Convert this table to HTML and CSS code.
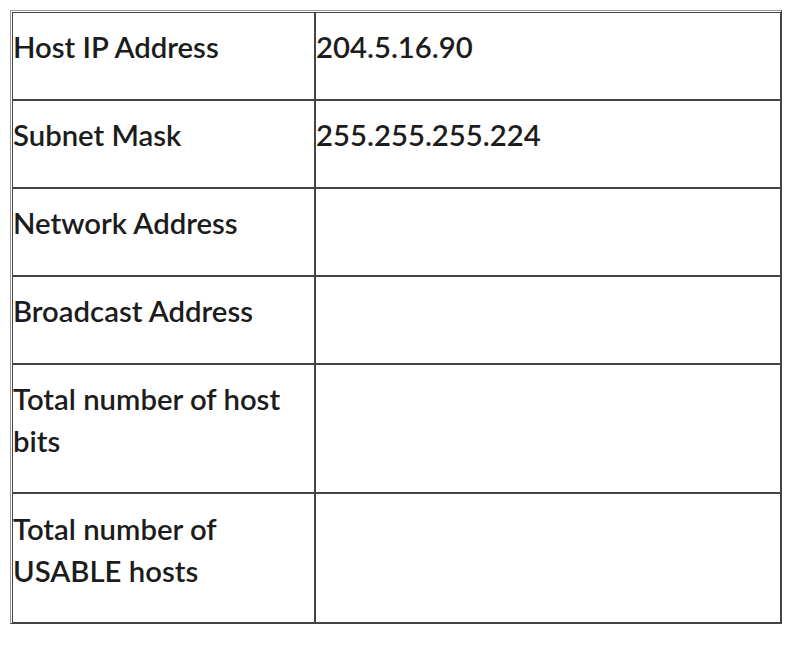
FILE: index.html
```html
<!DOCTYPE html>
<html>
<head>
<meta charset="utf-8">
<link rel="stylesheet" href="styles.css">
</head>
<body>
<table class="grid">
  <tr><td class="label">Host IP Address</td><td class="value">204.5.16.90</td></tr>
  <tr><td class="label">Subnet Mask</td><td class="value">255.255.255.224</td></tr>
  <tr><td class="label">Network Address</td><td class="value"></td></tr>
  <tr><td class="label">Broadcast Address</td><td class="value"></td></tr>
  <tr><td class="label">Total number of host bits</td><td class="value"></td></tr>
  <tr><td class="label">Total number of USABLE hosts</td><td class="value"></td></tr>
</table>
</body>
</html>
```
FILE: styles.css
```css
html, body {
  margin: 0;
  padding: 0;
  background: #ffffff;
}
body {
  padding: 10px 0 0 10px;
  font-family: Lato, "Liberation Sans", sans-serif;
  color: #1c1c1c;
}
.grid {
  border-collapse: separate;
  border-spacing: 0;
  width: 772px;
  border-style: solid;
  border-width: 1px;
  border-color: #9a9a9a #444 #444 #9a9a9a;
  padding: 1px 0 0 1px;
}
.grid td {
  border: 1px solid #444;
  padding: 13.3px 2px 30.6px 0;
  font-size: 29.3px;
  font-weight: 600;
  line-height: 42px;
  vertical-align: top;
}
.grid td.label {
  width: 299px;
}
.grid td.value {
  padding-left: 0;
}
```
